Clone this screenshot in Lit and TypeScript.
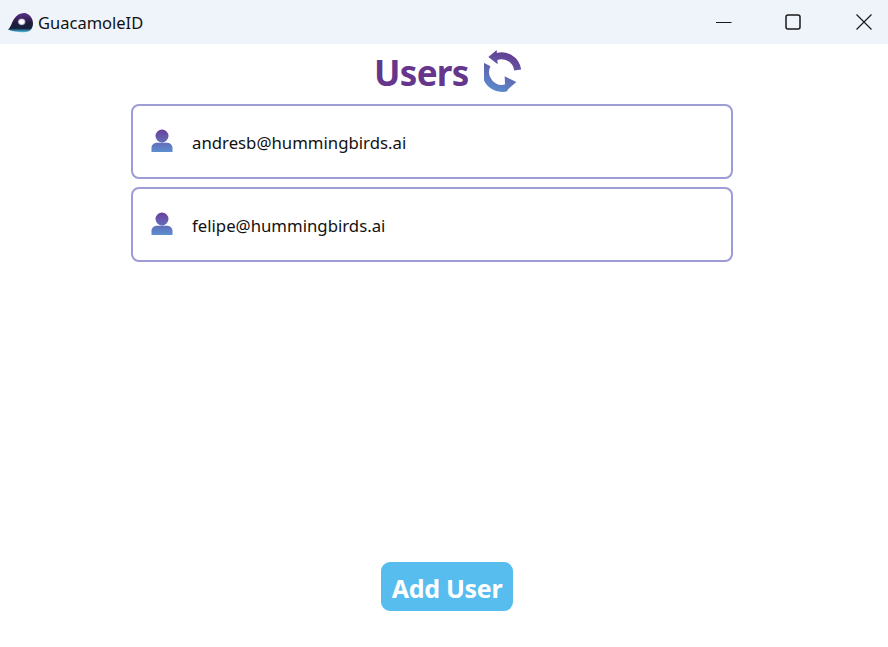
import { LitElement, html, css, svg } from "lit";
import { customElement } from "lit/decorators.js";

const person = (id: string) => svg`<svg class="person" width="22" height="24" viewBox="0 0 22 24">
  <defs><linearGradient id=${id} x1="0" y1="0" x2="0" y2="1">
    <stop offset="0" stop-color="#6a3f9a"/><stop offset="1" stop-color="#5b8fd0"/>
  </linearGradient></defs>
  <path fill="url(#${id})" d="M11 .500a6.500 6.500 0 1 1 0 13a6.500 6.500 0 0 1 0-13ZM6 13.800h10c3 0 5.500 2.200 5.500 5v4.200h-21v-4.200c0-2.800 2.500-5 5.500-5Z"/>
</svg>`;

@customElement("app-root")
export class AppRoot extends LitElement {
  static styles = css`
    :host { display: flex; flex-direction: column; height: 647px; width: 888px; background: #fff; overflow: hidden;
      font-family: "Noto Sans", "Open Sans", sans-serif; color: #111; }
    .bar { flex: none; height: 44px; background: #eff3fa; display: flex; align-items: center; padding: 0 1px 0 8px; gap: 23px; }
    .brand { flex: 1; display: flex; align-items: center; gap: 5px; }
    .app { font-size: 16.500px; color: #111; }
    .ctl { width: 46px; height: 44px; display: flex; align-items: center; justify-content: center; }
    .ctl.close { margin-left: 2px; }
    .main { flex: 1; display: flex; flex-direction: column; align-items: flex-start; padding-bottom: 36px; }
    .head { display: flex; align-items: center; height: 56px; gap: 15px; flex: none; margin: 0 0 4px 374px; }
    h1 { margin: 0; font-size: 35px; font-weight: 700; color: #65368c; line-height: 1; letter-spacing: -0.7px; }
    .list { display: flex; flex-direction: column; gap: 8px; width: 602px; flex: 1; margin-left: 131px; }
    .card { box-sizing: border-box; height: 75px; border: 2px solid #9e9cd6; border-radius: 8px; display: flex; align-items: center; padding-left: 18px; gap: 19px; font-size: 16.750px; color: #111; }
    .card span { padding-top: 2px; }
    .person { flex: none; margin-top: -2px; }
    .add { box-sizing: border-box; width: 132px; height: 49px; margin-left: 381px; border-radius: 9px; background: #57bdef; color: #fff; border: 0; font: 700 25px "Noto Sans", "Open Sans", sans-serif; letter-spacing: -0.3px; display: flex; align-items: center; justify-content: center; padding: 2px 0 0; }
  `;

  render() {
    return html`
      <div class="bar">
        <div class="brand">
          <svg width="25" height="21" viewBox="0 0 25 21">
            <defs>
              <linearGradient id="lg" x1="0" y1="0" x2="0" y2="1">
                <stop offset="0" stop-color="#5a2f8a"/><stop offset=".5" stop-color="#231c3c"/>
                <stop offset=".8" stop-color="#14233c"/><stop offset="1" stop-color="#52c5ee"/>
              </linearGradient>
              <radialGradient id="eye"><stop offset=".55" stop-color="#fff"/><stop offset="1" stop-color="#8f86b8"/></radialGradient>
            </defs>
            <path fill="url(#lg)" d="M0 17.500C2.500 16 3.500 11 6 7C9 2.500 14 0 18.500 1.500C22.500 3 25 7 25 11.500C25 16.500 22 19.500 18 20C13 20.500 8 20 4.500 19C2.500 18.500 1 18.200 0 17.500Z"/>
            <ellipse cx="13.700" cy="9.800" rx="3.800" ry="3.400" fill="url(#eye)"/>
          </svg>
          <span class="app">GuacamoleID</span>
        </div>
        <span class="ctl"><svg width="16" height="16" viewBox="0 0 16 16"><path d="M0 8.500h15.500" stroke="#1a1a1a" fill="none"/></svg></span>
        <span class="ctl"><svg width="16" height="16" viewBox="0 0 16 16"><rect x="1" y="1" width="14" height="14" rx="2" stroke="#1a1a1a" stroke-width="1.500" fill="none"/></svg></span>
        <span class="ctl close"><svg width="16" height="16" viewBox="0 0 16 16"><path d="M.5.500l15 15M15.500.500l-15 15" stroke="#1a1a1a" stroke-width="1.200" fill="none"/></svg></span>
      </div>
      <div class="main">
        <div class="head">
          <h1>Users</h1>
          <svg width="38" height="44" viewBox="24 12 114 132">
            <defs><linearGradient id="rg" gradientUnits="userSpaceOnUse" x1="105" y1="15" x2="55" y2="140">
              <stop offset="0" stop-color="#65368c"/><stop offset="1" stop-color="#5b8fd0"/>
            </linearGradient></defs>
            <path fill="none" stroke="url(#rg)" stroke-width="21" d="M58 33A49 49 0 0 1 125 72M34 56A49 49 0 0 0 92 125"/>
            <path fill="url(#rg)" d="M37 33L62 12L65 55ZM121 108L86 91L88 137Z"/>
          </svg>
        </div>
        <div class="list">
          <div class="card">${person("p1")}<span>andresb@hummingbirds.ai</span></div>
          <div class="card">${person("p2")}<span>felipe@hummingbirds.ai</span></div>
        </div>
        <button class="add">Add User</button>
      </div>
    `;
  }
}
